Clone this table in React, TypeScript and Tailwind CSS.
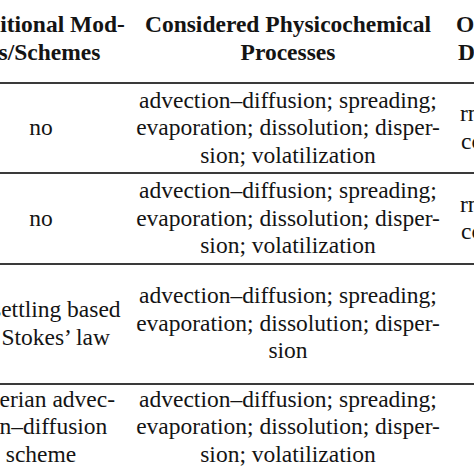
import React from 'react';

type Row = {
  left: string[];
  middle: string[];
  right: { text: string; indent: string }[];
  box: string;
};

const rows: Row[] = [
  {
    left: ['no'],
    middle: ['advection–diffusion; spreading;', 'evaporation; dissolution; disper-', 'sion; volatilization'],
    right: [
      { text: 'rn', indent: 'ml-[9px]' },
      { text: 'co', indent: 'ml-[10px]' },
    ],
    box: 'h-[90.5px] items-center',
  },
  {
    left: ['no'],
    middle: ['advection–diffusion; spreading;', 'evaporation; dissolution; disper-', 'sion; volatilization'],
    right: [
      { text: 'rn', indent: 'ml-[9px]' },
      { text: 'co', indent: 'ml-[10px]' },
    ],
    box: 'h-[90.5px] items-center',
  },
  {
    left: ['oil settling based', 'on Stokes’ law'],
    middle: ['advection–diffusion; spreading;', 'evaporation; dissolution; disper-', 'sion'],
    right: [],
    box: 'h-[120px] items-center',
  },
  {
    left: ['Eulerian advec-', 'tion–diffusion', 'scheme'],
    middle: ['advection–diffusion; spreading;', 'evaporation; dissolution; disper-', 'sion; volatilization'],
    right: [],
    box: 'h-[120px] items-start pt-[1px]',
  },
];

function Lines({ lines }: { lines: string[] }) {
  return (
    <div className="flex flex-col items-center">
      {lines.map((line, i) => (
        <span key={i} className="whitespace-nowrap">
          {line}
        </span>
      ))}
    </div>
  );
}

export default function App() {
  return (
    <div className="w-[474px] h-[474px] overflow-hidden bg-white text-[#141414] font-['Liberation_Serif',serif] text-[23.5px] leading-[27.5px]">
      <div className="ml-[-43px] w-[600px]">
        {/* header */}
        <div className="grid grid-cols-[168px_326px_106px] pt-[11px] pb-[15.7px] border-b-2 border-[#3a3a3a] font-bold">
          <Lines lines={['Additional Mod-', 'els/Schemes']} />
          <Lines lines={['Considered Physicochemical', 'Processes']} />
          <div className="flex flex-col">
            <span className="ml-[5px] whitespace-nowrap">Oil Spill</span>
            <span className="ml-[7px] whitespace-nowrap">Data</span>
          </div>
        </div>

        {rows.map((row, i) => (
          <div
            key={i}
            className={`grid grid-cols-[168px_326px_106px] border-b-2 border-[#3a3a3a] ${row.box}`}
          >
            <Lines lines={row.left} />
            <Lines lines={row.middle} />
            <div className="flex flex-col">
              {row.right.map((r, j) => (
                <span key={j} className={`whitespace-nowrap ${r.indent}`}>
                  {r.text}
                </span>
              ))}
            </div>
          </div>
        ))}
      </div>
    </div>
  );
}
